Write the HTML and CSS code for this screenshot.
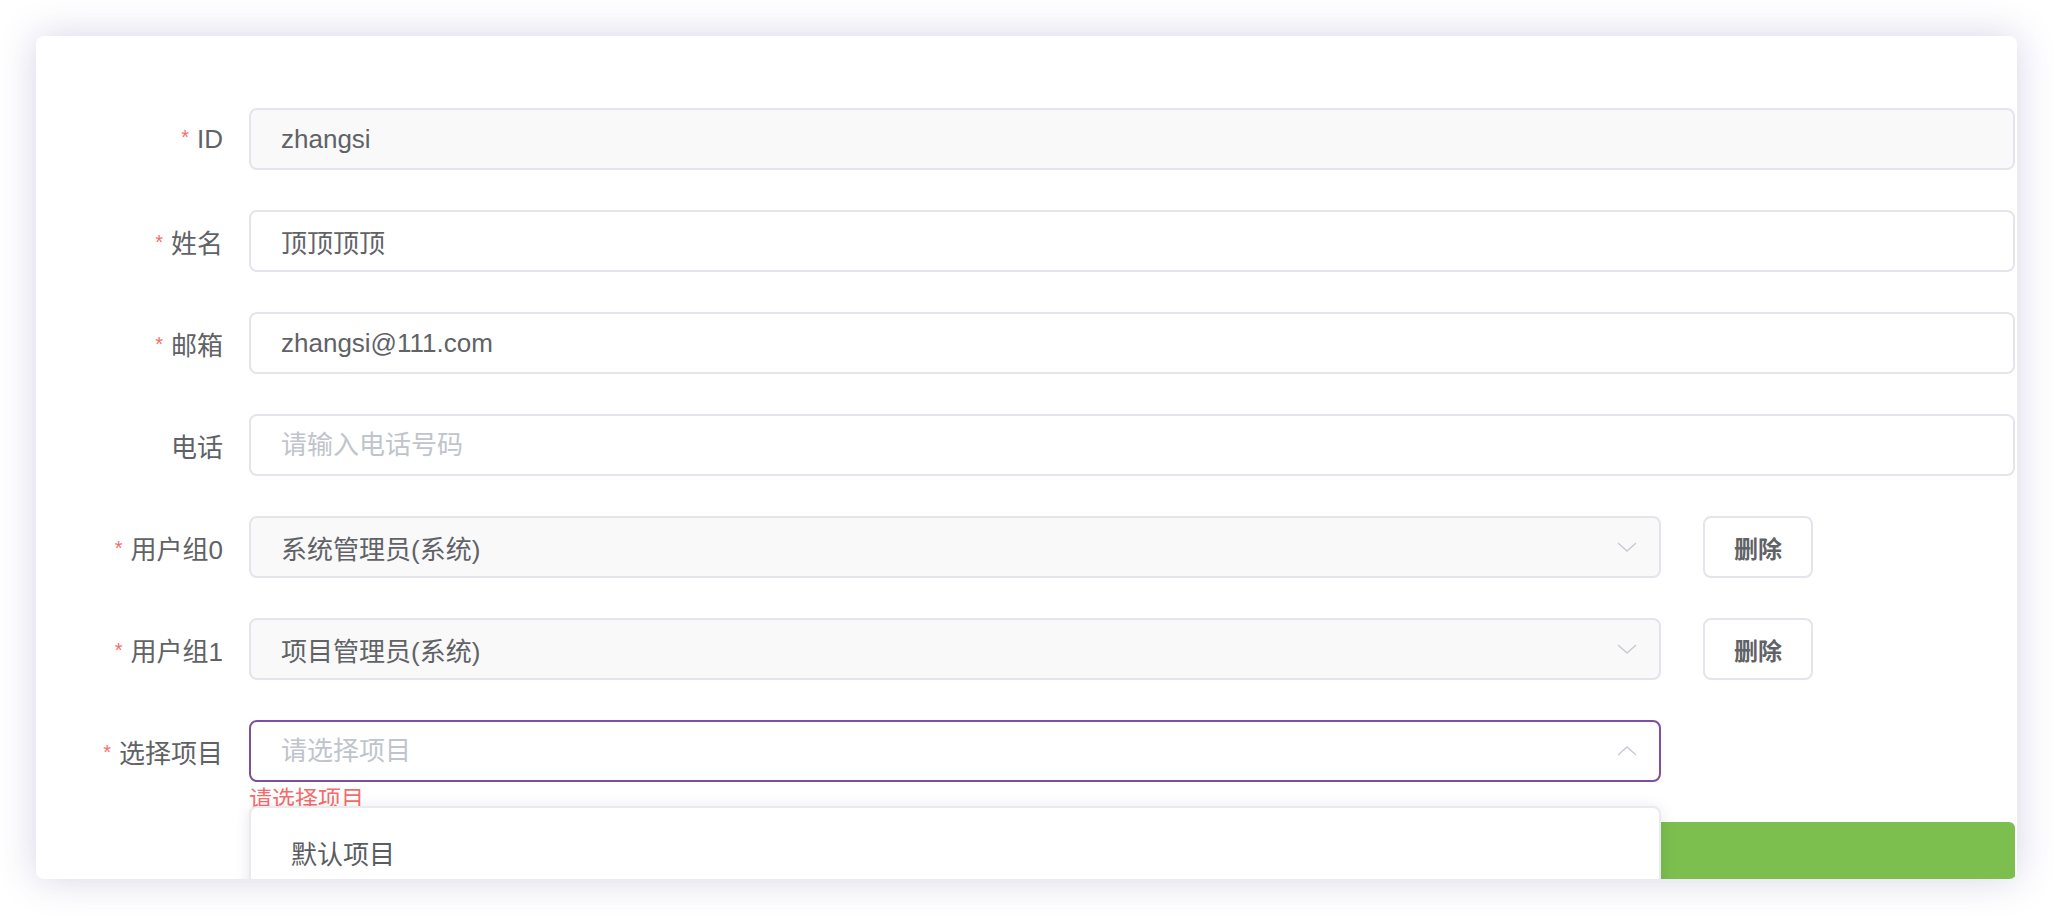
FILE: index.html
```html
<!DOCTYPE html>
<html lang="zh-CN">
<head>
    <meta charset="UTF-8">
    <meta name="viewport" content="width=device-width, initial-scale=1.0">
    <title>编辑用户</title>
    <link rel="stylesheet" href="styles.css">
</head>
<body>
    <div class="card">
        <form class="user-form">
            <div class="form-item">
                <label class="form-label required">ID</label>
                <div class="form-control">
                    <input class="input is-disabled" type="text" value="zhangsi" readonly>
                </div>
            </div>
            <div class="form-item">
                <label class="form-label required">姓名</label>
                <div class="form-control">
                    <input class="input" type="text" value="顶顶顶顶">
                </div>
            </div>
            <div class="form-item">
                <label class="form-label required">邮箱</label>
                <div class="form-control">
                    <input class="input" type="text" value="zhangsi@111.com">
                </div>
            </div>
            <div class="form-item">
                <label class="form-label">电话</label>
                <div class="form-control">
                    <input class="input" type="text" placeholder="请输入电话号码">
                </div>
            </div>
            <div class="form-item">
                <label class="form-label required">用户组0</label>
                <div class="form-control">
                    <div class="select is-disabled">
                        <input class="input" type="text" value="系统管理员(系统)" readonly>
                        <svg class="select-arrow" viewBox="0 0 20 10"><polyline points="1,1 10,9 19,1"/></svg>
                    </div>
                    <button class="btn" type="button">删除</button>
                </div>
            </div>
            <div class="form-item">
                <label class="form-label required">用户组1</label>
                <div class="form-control">
                    <div class="select is-disabled">
                        <input class="input" type="text" value="项目管理员(系统)" readonly>
                        <svg class="select-arrow" viewBox="0 0 20 10"><polyline points="1,1 10,9 19,1"/></svg>
                    </div>
                    <button class="btn" type="button">删除</button>
                </div>
            </div>
            <div class="form-item">
                <label class="form-label required">选择项目</label>
                <div class="form-control">
                    <div class="select is-focus">
                        <input class="input" type="text" placeholder="请选择项目" readonly>
                        <svg class="select-arrow" viewBox="0 0 20 10"><polyline points="1,9 10,1 19,9"/></svg>
                        <div class="form-error">请选择项目</div>
                        <ul class="select-dropdown">
                            <li class="select-option">默认项目</li>
                        </ul>
                    </div>
                </div>
            </div>
            <div class="form-item">
                <span class="form-label"></span>
                <div class="form-control">
                    <button class="btn-submit" type="button">保存</button>
                </div>
            </div>
        </form>
    </div>
</body>
</html>
```

FILE: styles.css
```css
html, body {
    height: 100%;
}
body {
    margin: 0;
    padding: 36px 37px 0 36px;
    box-sizing: border-box;
    background-color: #fff;
    font-family: "Liberation Sans", "Noto Sans CJK SC", sans-serif;
    color: #606266;
}
.card {
    height: 843px;
    background-color: #fff;
    border-radius: 8px;
    overflow: hidden;
    padding: 72px 2px 0 0;
    box-sizing: border-box;
    box-shadow: 0 0 38px rgba(70, 60, 140, 0.22);
}
.form-item {
    display: flex;
    align-items: center;
    height: 62px;
    margin-bottom: 40px;
}
.form-label {
    flex: 0 0 213px;
    padding-right: 26px;
    box-sizing: border-box;
    text-align: right;
    font-size: 26px;
    color: #606266;
}
.form-label.required::before {
    content: "*";
    display: inline-block;
    color: #f56c6c;
    font-size: 20px;
    vertical-align: 4px;
    margin-right: 8px;
}
.form-control {
    flex: 1;
    display: flex;
    align-items: center;
    gap: 42px;
    height: 100%;
    position: relative;
}
.input {
    width: 100%;
    height: 62px;
    box-sizing: border-box;
    padding: 0 30px;
    border: 2px solid #e4e5ec;
    border-radius: 8px;
    background-color: #fff;
    font-family: inherit;
    font-size: 26px;
    color: #606266;
    outline: none;
}
.input::placeholder {
    color: #c0c4cc;
}
.input.is-disabled,
.select.is-disabled .input {
    background-color: #f9f9fa;
}
.select {
    position: relative;
    flex: 0 0 1412px;
    height: 62px;
}
.select.is-focus .input {
    border-color: #7e4f9e;
}
.select-arrow {
    position: absolute;
    right: 24px;
    top: 26px;
    width: 20px;
    height: 10px;
    fill: none;
    stroke: #c8cad2;
    stroke-width: 1.4;
}
.btn {
    width: 110px;
    height: 62px;
    border: 2px solid #e4e5ec;
    border-radius: 8px;
    background-color: #fff;
    font-family: inherit;
    font-size: 24px;
    font-weight: 600;
    color: #606266;
    cursor: pointer;
}
.form-error {
    position: absolute;
    left: 0;
    top: calc(100% + 6px);
    font-size: 23px;
    line-height: 1;
    color: #f56c6c;
}
.select-dropdown {
    position: absolute;
    left: 0;
    right: 0;
    top: calc(100% + 24px);
    z-index: 10;
    margin: 0;
    padding: 12px 0;
    list-style: none;
    background-color: #fff;
    border: 2px solid #e9eaf0;
    border-radius: 8px;
    box-shadow: 0 2px 16px rgba(0, 0, 0, 0.1);
}
.select-option {
    height: 70px;
    line-height: 70px;
    padding: 0 40px;
    font-size: 26px;
    color: #5a5c61;
}
.btn-submit {
    flex: 1;
    height: 62px;
    border: none;
    border-radius: 6px;
    background-color: #7cbf4f;
    font-family: inherit;
    font-size: 26px;
    color: #fff;
}
```
